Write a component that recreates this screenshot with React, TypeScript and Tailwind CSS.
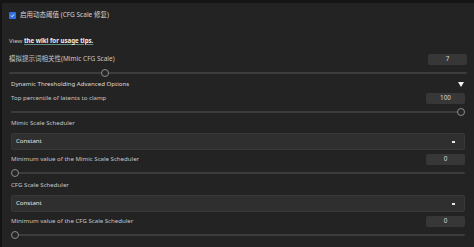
import React from "react";

const font = { fontFamily: '"Noto Sans", "Noto Sans CJK SC", sans-serif' };

const NumBox = ({ value }: { value: string }) => (
  <div className="w-[39px] h-[11px] bg-[#373737] rounded-[2px] flex items-center justify-center text-[6.3px] text-[#d8d8d8]">
    {value}
  </div>
);

const Slider = ({ pct }: { pct: number }) => (
  <div className="relative h-[8px] flex items-center">
    <div className="w-full h-[2px] bg-[#3c3c3c] rounded-full" />
    <div
      className="absolute top-0 w-[8px] h-[8px] rounded-full border border-[#8c8c8c] bg-[#262626]"
      style={{ left: `calc((100% - 8px) * ${pct})` }}
    />
  </div>
);

const Select = ({ value }: { value: string }) => (
  <div className="h-[17px] bg-[#2f2f2f] border border-[#383838] rounded-[2px] flex items-center justify-between pl-[4px] pr-[9px] text-[#e2e2e2]">
    <span>{value}</span>
    <span className="w-[3px] h-[2px] bg-[#e8e8e8]" />
  </div>
);

const LabelRow = ({ label, value, cjk }: { label: string; value: string; cjk?: boolean }) => (
  <div className="h-[11px] flex items-center justify-between">
    <span className={cjk ? "text-[6.5px]" : ""}>{label}</span>
    <NumBox value={value} />
  </div>
);

export default function App() {
  return (
    <div className="w-[474px] h-[247px] bg-[#141414] pt-[3px] pl-[2px] overflow-hidden" style={font}>
      <div className="h-full bg-[#232323] pl-[7px] pr-[7px] pt-[8px] text-[6.1px] text-[#c6c6c6] leading-none">
        <div className="h-[9px] flex items-center gap-[4px]">
          <div className="w-[7px] h-[7px] rounded-[1px] bg-[#2f6fe0] flex items-center justify-center">
            <svg width="5" height="5" viewBox="0 0 10 10">
              <path d="M2 5.2 L4.2 7.4 L8 2.8" fill="none" stroke="#fff" strokeWidth="1.8" />
            </svg>
          </div>
          <span className="text-[6.5px] text-[#d4d4d4]">启用动态阈值 (CFG Scale 修复)</span>
        </div>

        <div className="mt-[16px] h-[10px] flex items-center">
          <span>
            View{" "}
            <span className="font-bold text-[#f0f0f0] underline decoration-[#5d8c80] underline-offset-[1px]">
              the wiki for usage tips.
            </span>
          </span>
        </div>

        <div className="mt-[8px]">
          <LabelRow label="模拟提示词相关性(Mimic CFG Scale)" value="7" cjk />
        </div>
        <div className="mt-[4px]">
          <Slider pct={0.205} />
        </div>

        <div className="pl-[2px] pr-[2px]">
          <div className="mt-[2px] h-[10px] flex items-center justify-between text-[#dedede]">
            <span>Dynamic Thresholding Advanced Options</span>
            <svg width="6" height="5" viewBox="0 0 6 5" className="mr-[1px]">
              <polygon points="0,0 6,0 3,5" fill="#f2f2f2" />
            </svg>
          </div>

          <div className="mt-[4px]">
            <LabelRow label="Top percentile of latents to clamp" value="100" />
          </div>
          <div className="mt-[4px]">
            <Slider pct={1} />
          </div>

          <div className="mt-[2px] h-[10px] flex items-center">Mimic Scale Scheduler</div>
          <div className="mt-[5px]">
            <Select value="Constant" />
          </div>
          <div className="mt-[4px]">
            <LabelRow label="Minimum value of the Mimic Scale Scheduler" value="0" />
          </div>
          <div className="mt-[4px]">
            <Slider pct={0} />
          </div>

          <div className="mt-[3px] h-[10px] flex items-center">CFG Scale Scheduler</div>
          <div className="mt-[5px]">
            <Select value="Constant" />
          </div>
          <div className="mt-[4px]">
            <LabelRow label="Minimum value of the CFG Scale Scheduler" value="0" />
          </div>
          <div className="mt-[4px]">
            <Slider pct={0} />
          </div>
        </div>
      </div>
    </div>
  );
}
